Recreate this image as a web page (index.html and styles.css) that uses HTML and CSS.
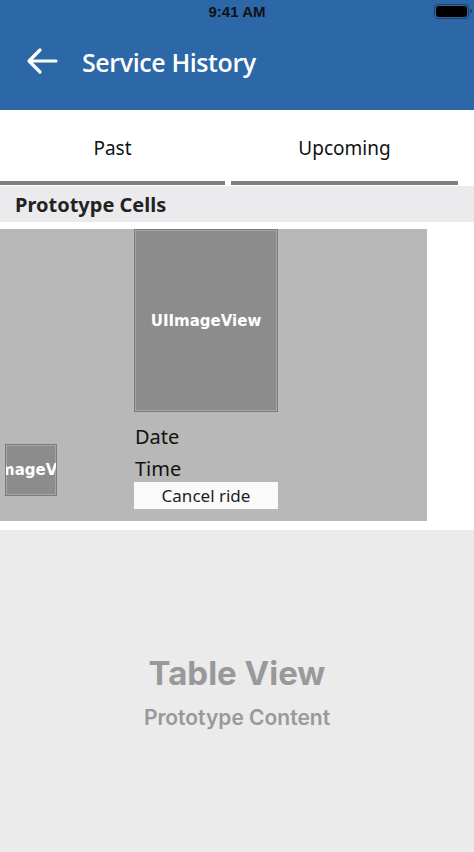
FILE: index.html
```html
<!DOCTYPE html>
<html lang="en">
<head>
    <meta charset="UTF-8">
    <meta name="viewport" content="width=device-width, initial-scale=1.0">
    <title>Service History</title>
    <link rel="stylesheet" href="styles.css">
</head>
<body>
    <div class="appbar">
        <div class="status-bar">
            <span class="clock">9:41 AM</span>
            <span class="battery"><span class="battery-fill"></span></span>
        </div>
        <div class="nav-row">
            <svg class="back-arrow" width="32" height="28" viewBox="0 0 32 28">
                <path d="M30 14 H3 M14 3 L3 14 L14 25" fill="none" stroke="#fff" stroke-width="3.2" stroke-linecap="round" stroke-linejoin="round"/>
            </svg>
            <h1 class="title">Service History</h1>
        </div>
    </div>

    <div class="tabs">
        <div class="tab tab-past">Past</div>
        <div class="tab tab-upcoming">Upcoming</div>
    </div>

    <div class="section-header">Prototype Cells</div>

    <div class="cell">
        <div class="cell-left">
            <div class="image-view small-image"><span>UIImageView</span></div>
        </div>
        <div class="cell-main">
            <div class="image-view big-image"><span>UIImageView</span></div>
            <div class="cell-label label-date">Date</div>
            <div class="cell-label label-time">Time</div>
            <button class="cancel-button">Cancel ride</button>
        </div>
    </div>

    <div class="table-view">
        <div class="table-title">Table View</div>
        <div class="table-subtitle">Prototype Content</div>
    </div>
</body>
</html>
```

FILE: styles.css
```css
body {
    margin: 0;
    width: 474px;
    height: 852px;
    overflow: hidden;
    background-color: #fff;
    font-family: "Noto Sans", "Open Sans", sans-serif;
}
.appbar {
    height: 110px;
    background-color: #2c67a8;
    color: #fff;
}
.status-bar {
    height: 22px;
    position: relative;
    display: flex;
    justify-content: center;
    align-items: center;
}
.clock {
    font-family: "Liberation Sans", Arial, sans-serif;
    font-weight: bold;
    font-size: 15px;
    color: #111;
}
.battery {
    position: absolute;
    right: 5px;
    top: 4px;
    width: 31px;
    height: 11px;
    border: 1px solid #1f3f66;
    border-radius: 4px;
    padding: 1px;
}
.battery::after {
    content: "";
    position: absolute;
    right: -4px;
    top: 4px;
    width: 2px;
    height: 4px;
    background-color: #1f3f66;
    border-radius: 0 2px 2px 0;
}
.battery-fill {
    display: block;
    height: 100%;
    background-color: #000;
    border-radius: 3px;
}
.nav-row {
    display: flex;
    align-items: center;
    height: 80px;
    padding-left: 26px;
}
.back-arrow {
    display: block;
    margin-top: -2px;
}
.title {
    margin: 0 0 0 24px;
    font-family: "Open Sans", "Noto Sans", sans-serif;
    font-weight: 600;
    font-size: 25px;
    letter-spacing: -0.4px;
}
.tabs {
    display: flex;
    gap: 6px;
    height: 75px;
}
.tab {
    display: flex;
    justify-content: center;
    align-items: center;
    border-bottom: 4px solid #808080;
    font-size: 19px;
    color: #111;
    padding-top: 4px;
}
.tab-past {
    width: 225px;
}
.tab-upcoming {
    width: 227px;
}
.section-header {
    margin-top: 1px;
    height: 36px;
    background-color: #ebebed;
    padding-left: 15px;
    display: flex;
    align-items: center;
    font-weight: bold;
    font-size: 20px;
    color: #222;
}
.cell {
    margin-top: 7px;
    width: 427px;
    height: 292px;
    background-color: #b8b8b8;
    display: flex;
}
.cell-left {
    width: 134px;
    padding: 215px 0 0 5px;
    box-sizing: border-box;
}
.image-view {
    box-sizing: border-box;
    background-color: #8c8c8c;
    border: 1px solid #7c7c7c;
    box-shadow: inset 0 0 0 1px #a4a4a4;
    display: flex;
    justify-content: center;
    align-items: center;
    overflow: hidden;
    color: #fff;
    font-family: "DejaVu Sans", sans-serif;
    font-weight: bold;
    font-size: 15px;
    white-space: nowrap;
}
.small-image {
    width: 52px;
    height: 52px;
}
.big-image {
    width: 144px;
    height: 183px;
}
.cell-main {
    width: 144px;
    display: flex;
    flex-direction: column;
}
.cell-label {
    font-size: 20px;
    color: #111;
    height: 32px;
    line-height: 32px;
    padding-left: 1px;
}
.label-date {
    margin-top: 9px;
}
.label-time {
    margin-top: 1px;
    height: 28px;
    line-height: 30px;
}
.cancel-button {
    width: 144px;
    height: 27px;
    border: none;
    background-color: #fafafa;
    font-family: "Noto Sans", sans-serif;
    font-size: 17px;
    color: #222;
    padding: 0;
}
.table-view {
    margin-top: 9px;
    height: 322px;
    background-color: #ebebeb;
    display: flex;
    flex-direction: column;
    align-items: center;
    justify-content: center;
    color: #999;
    font-family: "Inter", "Noto Sans", sans-serif;
}
.table-title {
    font-weight: bold;
    font-size: 33px;
}
.table-subtitle {
    margin-top: 12px;
    font-weight: 600;
    font-size: 21px;
}
```
